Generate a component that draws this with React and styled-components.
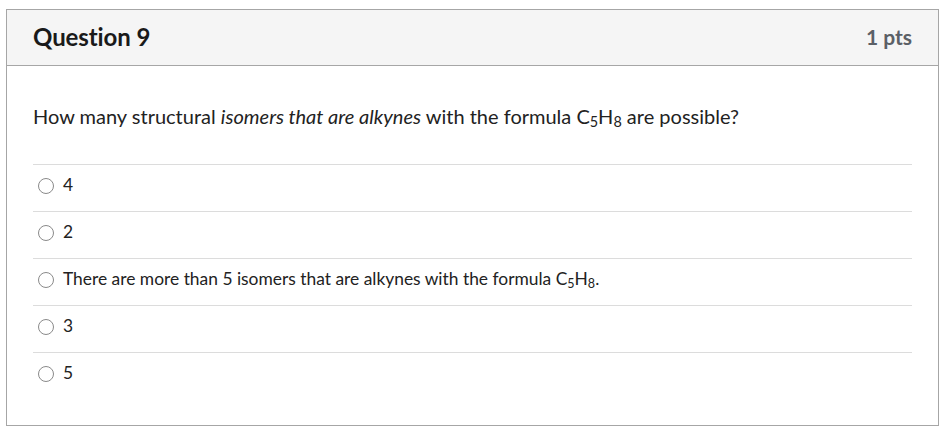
import React from "react";
import styled, { createGlobalStyle } from "styled-components";

const Global = createGlobalStyle`
  html, body { margin: 0; padding: 0; background: #fff; }
  body { font-family: Lato, "Open Sans", sans-serif; color: #2d3b45; }
`;

const Page = styled.div`
  padding: 9px 0 0 6px;
`;

const Card = styled.div`
  width: 933px;
  height: 417px;
  box-sizing: border-box;
  border: 1px solid #a6a6a6;
  display: flex;
  flex-direction: column;
`;

const Header = styled.div`
  height: 56px;
  background: #f5f5f5;
  border-bottom: 1px solid #a6a6a6;
  display: flex;
  align-items: center;
  justify-content: space-between;
  padding: 0 26px 2px;
  box-sizing: border-box;
`;

const Title = styled.div`
  font-size: 24px;
  font-weight: 700;
  color: #1a1a1a;
  letter-spacing: -0.1px;
`;

const Points = styled.div`
  font-size: 21px;
  font-weight: 700;
  color: #5b6066;
`;

const Body = styled.div`
  padding: 36px 26px 0;
`;

const Question = styled.div`
  font-size: 20px;
  line-height: 28px;
  color: #222;
  margin-bottom: 34px;
`;

const Sub = styled.sub`
  font-size: 0.72em;
  vertical-align: -0.2em;
  line-height: 0;
`;

const Answers = styled.div`
  display: flex;
  flex-direction: column;
`;

const Row = styled.label`
  display: flex;
  align-items: center;
  gap: 9px;
  height: 40px;
  padding-bottom: 6px;
  box-sizing: content-box;
  border-top: 1px solid #dcdcdc;
  padding-left: 5px;
  font-size: 17.4px;
  color: #222;
`;

const Radio = styled.span`
  width: 14px;
  height: 14px;
  border: 1px solid #8a8a8a;
  border-radius: 50%;
  flex: none;
  margin-top: 2px;
`;

const AnswerText = styled.span`
  margin-top: -2px;
`;

const answers = [
  "4",
  "2",
  <>There are more than 5 isomers that are alkynes with the formula C<Sub>5</Sub>H<Sub>8</Sub>.</>,
  "3",
  "5",
];

export default function App() {
  return (
    <>
      <Global />
      <Page>
        <Card>
          <Header>
            <Title>Question 9</Title>
            <Points>1 pts</Points>
          </Header>
          <Body>
            <Question>
              How many structural <i>isomers that are alkynes</i> with the formula C<Sub>5</Sub>H<Sub>8</Sub> are possible?
            </Question>
            <Answers>
              {answers.map((a, i) => (
                <Row key={i}>
                  <Radio />
                  <AnswerText>{a}</AnswerText>
                </Row>
              ))}
            </Answers>
          </Body>
        </Card>
      </Page>
    </>
  );
}
